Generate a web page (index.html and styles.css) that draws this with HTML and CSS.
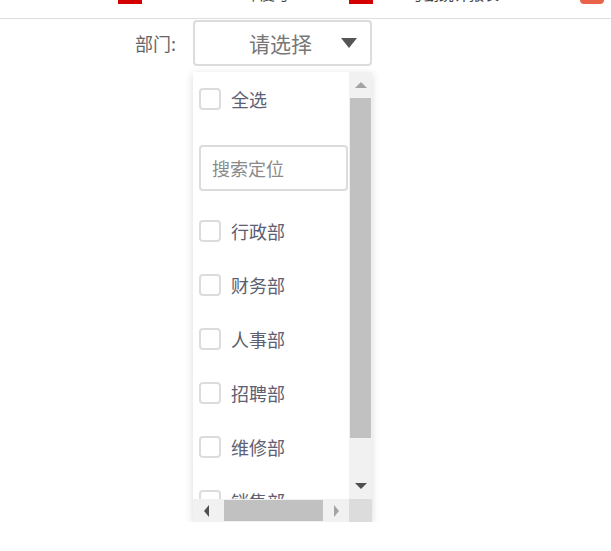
FILE: index.html
```html
<!DOCTYPE html>
<html>
<head>
  <title>部门选择</title>
  <link rel="stylesheet" href="styles.css">
</head>
<body>
  <div class="top-bar">
    <div class="top-items">
      <span class="tag-red tag-first"></span>
      <span class="top-text top-text-a">年度考勤</span>
      <span class="tag-red tag-second"></span>
      <span class="top-text top-text-b">考勤统计报表</span>
      <span class="tag-orange"></span>
    </div>
  </div>

  <div class="field-row">
    <label class="field-label">部门:</label>
    <div class="select-box">
      <span class="select-text">请选择</span>
      <span class="select-arrow"></span>
    </div>
  </div>

  <div class="dropdown">
    <div class="dropdown-list">
      <div class="option"><span class="check"></span><span class="option-text">全选</span></div>
      <div class="search-wrap">
        <input class="search-input" type="text" placeholder="搜索定位">
      </div>
      <div class="option"><span class="check"></span><span class="option-text">行政部</span></div>
      <div class="option"><span class="check"></span><span class="option-text">财务部</span></div>
      <div class="option"><span class="check"></span><span class="option-text">人事部</span></div>
      <div class="option"><span class="check"></span><span class="option-text">招聘部</span></div>
      <div class="option"><span class="check"></span><span class="option-text">维修部</span></div>
      <div class="option"><span class="check"></span><span class="option-text">销售部</span></div>
    </div>

    <div class="vbar">
      <div class="vbar-btn"><span class="arrow-up"></span></div>
      <div class="vbar-thumb"></div>
      <div class="vbar-space"></div>
      <div class="vbar-btn"><span class="arrow-down"></span></div>
    </div>

    <div class="hbar">
      <div class="hbar-btn"><span class="arrow-left"></span></div>
      <div class="hbar-thumb"></div>
      <div class="hbar-space"></div>
      <div class="hbar-btn"><span class="arrow-right"></span></div>
    </div>

    <div class="corner"></div>
  </div>
</body>
</html>
```

FILE: styles.css
```css
body {
  margin: 0;
  font-family: "Noto Sans CJK SC", "Noto Sans", sans-serif;
  background: #fff;
}

/* cut-off toolbar at the top */
.top-bar {
  height: 18px;
  border-bottom: 1px solid #dedede;
  overflow: hidden;
}

.top-items {
  display: flex;
  align-items: flex-end;
  height: 4px;
  overflow: hidden;
}

.tag-red {
  width: 24px;
  height: 4px;
  background-color: #d40000;
}

.tag-first {
  margin-left: 118px;
}

.top-text {
  font-size: 15px;
  line-height: 15px;
  color: #444;
  height: 16px;
  margin-top: -14px;
  margin-bottom: 2px;
  overflow: hidden;
}

.top-text-a {
  margin-left: 103px;
  margin-right: 47px;
  width: 57px;
}

.top-text-b {
  margin-left: 36px;
  width: 122px;
}

.tag-orange {
  width: 24px;
  height: 4px;
  margin-left: 49px;
  background-color: #e8634a;
  border-radius: 0 0 5px 5px;
}

/* form row */
.field-row {
  display: flex;
  align-items: center;
  margin-top: 1px;
}

.field-label {
  width: 176px;
  text-align: right;
  margin-right: 17px;
  font-size: 18px;
  color: #666;
}

.select-box {
  box-sizing: border-box;
  width: 179px;
  height: 46px;
  border: 2px solid #dcdcdc;
  border-radius: 4px;
  display: flex;
  align-items: center;
  padding: 0 13px 0 54px;
}

.select-text {
  flex: 1;
  font-size: 21px;
  color: #777;
}

.select-arrow {
  width: 0;
  height: 0;
  border-left: 8px solid transparent;
  border-right: 8px solid transparent;
  border-top: 10px solid #555;
}

/* dropdown panel */
.dropdown {
  margin: 6px 0 0 193px;
  width: 179px;
  height: 450px;
  display: grid;
  grid-template-columns: 1fr 23px;
  grid-template-rows: 1fr 23px;
  box-shadow: 0 2px 8px rgba(0, 0, 0, 0.15);
}

.dropdown-list {
  overflow: hidden;
  padding-left: 6px;
}

.option {
  display: flex;
  align-items: center;
  height: 54px;
}

.check {
  box-sizing: border-box;
  width: 22px;
  height: 22px;
  border: 2px solid #dcdcdc;
  border-radius: 4px;
  margin-right: 10px;
  flex-shrink: 0;
}

.option-text {
  font-size: 18px;
  color: #5b6072;
}

.search-wrap {
  padding: 19px 0 13px 0;
}

.search-input {
  box-sizing: border-box;
  width: 149px;
  height: 46px;
  border: 2px solid #dcdcdc;
  border-radius: 4px;
  padding: 0 11px;
  font-family: inherit;
  font-size: 18px;
  outline: none;
}

.search-input::placeholder {
  color: #8a8a8a;
}

/* fake scrollbars */
.vbar {
  background-color: #f1f1f1;
  display: flex;
  flex-direction: column;
  align-items: center;
}

.vbar-btn {
  height: 26px;
  width: 100%;
  display: flex;
  align-items: center;
  justify-content: center;
}

.vbar-thumb {
  width: 21px;
  height: 340px;
  background-color: #c1c1c1;
}

.vbar-space {
  flex: 1;
}

.hbar {
  background-color: #f1f1f1;
  display: flex;
  align-items: center;
}

.hbar-btn {
  width: 26px;
  height: 100%;
  display: flex;
  align-items: center;
  justify-content: center;
}

.hbar-thumb {
  width: 99px;
  height: 21px;
  margin-left: 5px;
  background-color: #c1c1c1;
}

.hbar-space {
  flex: 1;
}

.corner {
  background-color: #dcdcdc;
}

.arrow-up {
  border-left: 6px solid transparent;
  border-right: 6px solid transparent;
  border-bottom: 6px solid #a3a3a3;
}

.arrow-down {
  border-left: 6px solid transparent;
  border-right: 6px solid transparent;
  border-top: 6px solid #505050;
}

.arrow-left {
  border-top: 6px solid transparent;
  border-bottom: 6px solid transparent;
  border-right: 5px solid #505050;
}

.arrow-right {
  border-top: 6px solid transparent;
  border-bottom: 6px solid transparent;
  border-left: 5px solid #a3a3a3;
}
```
